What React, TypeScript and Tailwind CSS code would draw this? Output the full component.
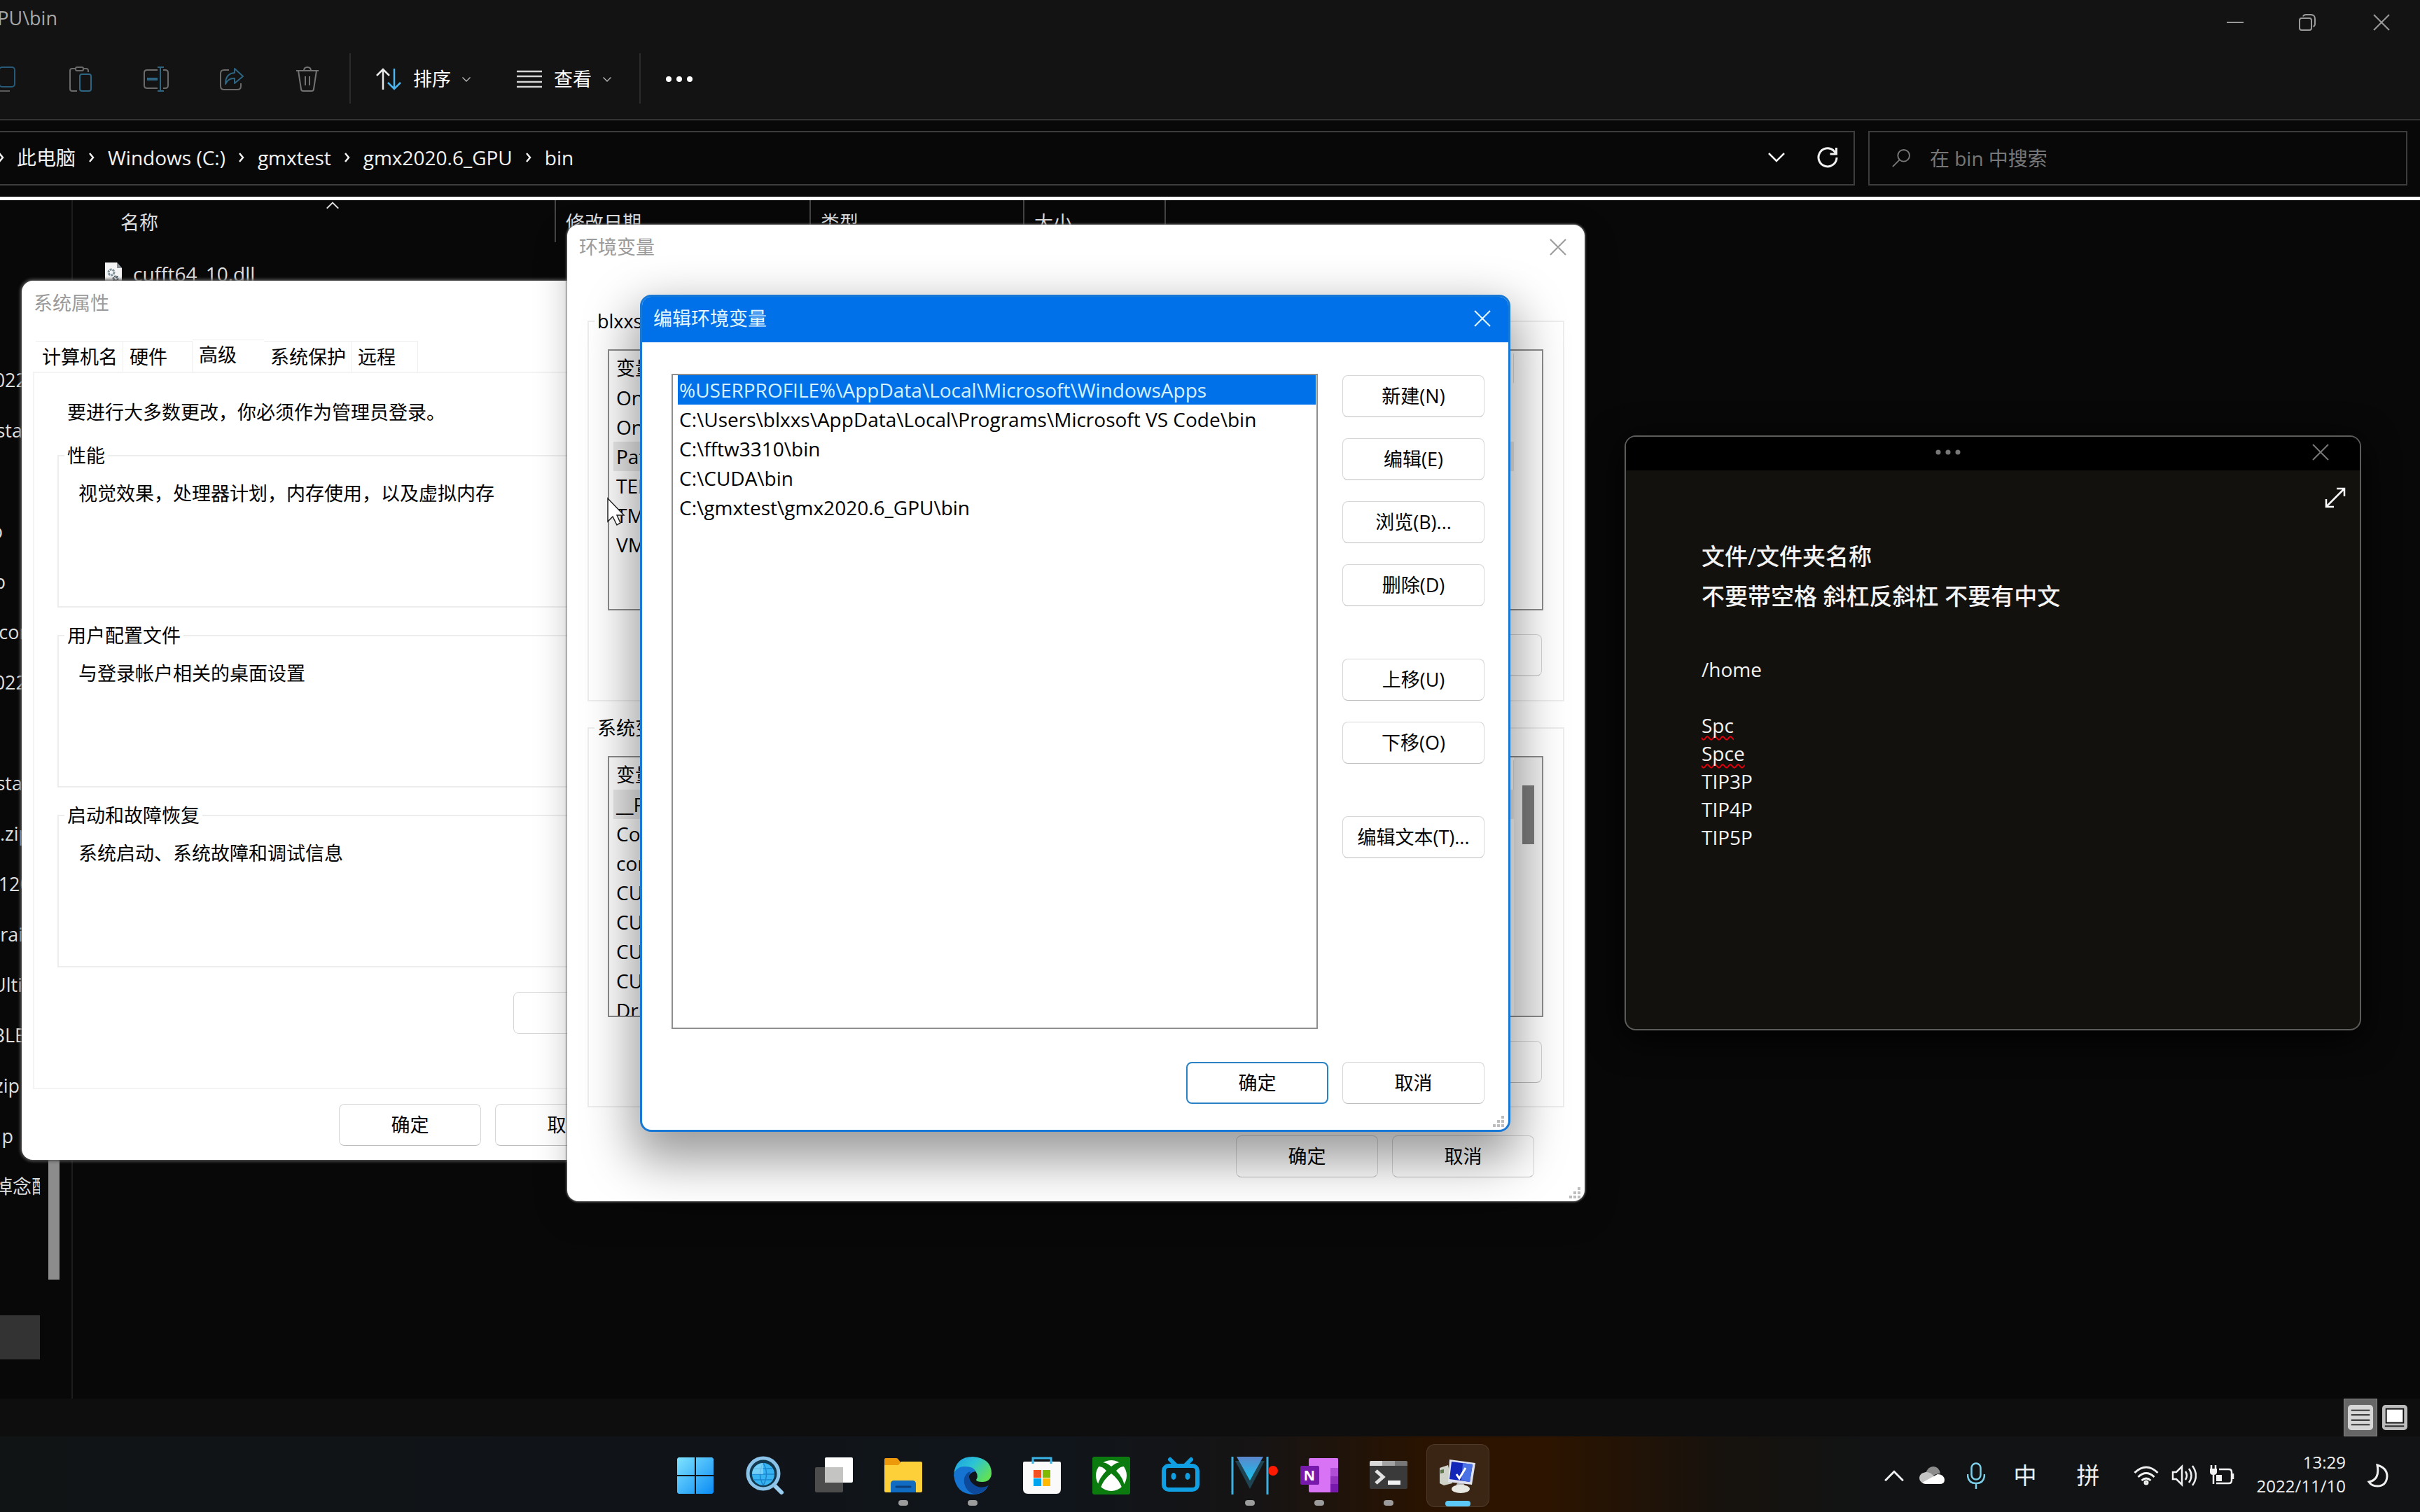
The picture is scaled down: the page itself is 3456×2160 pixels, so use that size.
import type { ReactNode } from 'react';

const crumbs = ['此电脑', 'Windows (C:)', 'gmxtest', 'gmx2020.6_GPU', 'bin'];

// entries of the scrolled tree, `end` is where the visible name stops
const treeRows = [
  { name: '022', end: 38 },
  { name: 'sta', end: 32 },
  { name: '', end: 32 },
  { name: 'zip', end: 4 },
  { name: 'zip', end: 8 },
  { name: 'con', end: 44 },
  { name: '022', end: 38 },
  { name: '', end: 32 },
  { name: 'sta', end: 32 },
  { name: '.zip', end: 43 },
  { name: '120', end: 44 },
  { name: 'rai', end: 33 },
  { name: 'Ulti', end: 32 },
  { name: 'BLE', end: 36 },
  { name: 'zip', end: 28 },
  { name: 'p', end: 19 },
  { name: '悼念配', end: 72 },
];

const tabs = [
  { name: '计算机名', width: 'w-[125px]' },
  { name: '硬件', width: 'w-[99px]' },
  { name: '高级', width: 'w-[102px]', active: true },
  { name: '系统保护', width: 'w-[125px]' },
  { name: '远程', width: 'w-[95px]' },
];

const groups = [
  { title: '性能', text: '视觉效果，处理器计划，内存使用，以及虚拟内存' },
  { title: '用户配置文件', text: '与登录帐户相关的桌面设置' },
  { title: '启动和故障恢复', text: '系统启动、系统故障和调试信息' },
];

const userVars = ['OneDrive', 'OneDriveConsumer', 'Path', 'TEMP', 'TMP', 'VMD'];
const systemVars = [
  '__PSLockDownPolicy',
  'ComSpec',
  'configsetroot',
  'CUDA_PATH',
  'CUDA_PATH_V11_6',
  'CUDNN',
  'CUDNN_PATH',
  'DriverData',
];

const paths = [
  '%USERPROFILE%\\AppData\\Local\\Microsoft\\WindowsApps',
  'C:\\Users\\blxxs\\AppData\\Local\\Programs\\Microsoft VS Code\\bin',
  'C:\\fftw3310\\bin',
  'C:\\CUDA\\bin',
  'C:\\gmxtest\\gmx2020.6_GPU\\bin',
];

function Close({ className }: { className: string }) {
  return (
    <svg viewBox="0 0 24 24" className={className} fill="none" stroke="currentColor" strokeWidth="2">
      <path d="M1 1 23 23M23 1 1 23" />
    </svg>
  );
}

function Chevron({ className }: { className: string }) {
  return (
    <svg viewBox="0 0 24 14" className={className} fill="none" stroke="currentColor" strokeWidth="2.5">
      <path d="M1 1 12 12 23 1" />
    </svg>
  );
}

function Grip() {
  return (
    <svg viewBox="0 0 16 16" className="absolute right-1.5 bottom-1 size-4" fill="#bdbdbd">
      <path d="M12 0h4v4h-4zM12 6h4v4h-4zM12 12h4v4h-4zM6 6h4v4H6zM6 12h4v4H6zM0 12h4v4H0z" />
    </svg>
  );
}

function DialogButton({ children, primary }: { children?: ReactNode; primary?: boolean }) {
  return (
    <button
      className={
        primary
          ? 'h-[60px] w-[203px] shrink-0 rounded-lg border-2 border-[#2a82c4] bg-white'
          : 'h-[60px] w-[203px] shrink-0 rounded-lg border border-[#d6d6d6] border-b-[#bcbcbc] bg-white/80'
      }
    >
      {children}
    </button>
  );
}

function GroupBox({ title, className, children }: { title: string; className?: string; children: ReactNode }) {
  return (
    <fieldset className={`min-w-0 border-2 border-[#ededed] pl-2 ${className ?? ''}`}>
      <legend className="px-1 leading-[40px]">{title}</legend>
      {children}
    </fieldset>
  );
}

function Explorer() {
  return (
    <main className="flex min-h-0 flex-1 flex-col">
      <header className="border-b-2 border-[#333] bg-[#131313]">
        <div className="flex h-[64px] items-center justify-between">
          <h1 className="flex w-[82px] justify-end overflow-hidden leading-[40px] text-[#a8a8a8]">
            <span className="mb-3">gmx2020.6_GPU\bin</span>
          </h1>
          <div className="flex text-[#9a9a9a]">
            <button aria-label="最小化" className="flex h-[64px] w-[104px] items-center justify-center">
              <svg viewBox="0 0 24 24" className="size-6" stroke="currentColor" strokeWidth="2"><path d="M0 12h24" /></svg>
            </button>
            <button aria-label="还原" className="flex h-[64px] w-[102px] items-center justify-center">
              <svg viewBox="0 0 24 24" className="size-6" fill="none" stroke="currentColor" strokeWidth="2">
                <rect x="1" y="6" width="17" height="17" rx="3" />
                <path d="M6 3.500Q7 1 10 1h7q6 0 6 6v7q0 3-2.500 4" />
              </svg>
            </button>
            <button aria-label="关闭" className="flex h-[64px] w-[110px] items-center justify-center">
              <Close className="size-6" />
            </button>
          </div>
        </div>

        <div className="-ml-[47px] flex h-[106px] items-start pt-3">
          <button aria-label="复制" className="flex h-[74px] w-[108px] items-center justify-center">
            <svg viewBox="0 0 36 36" className="size-9" fill="none" strokeWidth="2">
              <rect x="10" y="1" width="22" height="28" rx="4" stroke="#275a78" />
              <path d="M4 8v21q0 6 6 6h15" stroke="#5a5a5a" />
            </svg>
          </button>
          <button aria-label="粘贴" className="flex h-[74px] w-[108px] items-center justify-center">
            <svg viewBox="0 0 36 36" className="size-9" fill="none" strokeWidth="2">
              <path d="M11 3H6q-3 0-3 3v26q0 3 3 3h7M22 3h4q3 0 3 3v2" stroke="#6a6a6a" />
              <rect x="11" y="1" width="11" height="5" rx="2" stroke="#6a6a6a" />
              <rect x="17" y="11" width="16" height="24" rx="3" stroke="#2d6583" />
            </svg>
          </button>
          <button aria-label="重命名" className="flex h-[74px] w-[108px] items-center justify-center">
            <svg viewBox="0 0 36 36" className="size-9" fill="none" strokeWidth="2">
              <path d="M20 5H5Q1 5 1 9v18q0 4 4 4h15M28 5h3q4 0 4 4v18q0 4-4 4h-3" stroke="#6a6a6a" />
              <path d="M24 1v34M20 1h9M20 35h9" stroke="#2d6583" />
              <path d="M5 18h15" stroke="#2d6583" strokeWidth="4" />
            </svg>
          </button>
          <button aria-label="共享" className="flex h-[74px] w-[108px] items-center justify-center">
            <svg viewBox="0 0 36 36" className="size-9" fill="none" strokeWidth="2">
              <path d="M14 5H7Q2 5 2 10v18q0 5 5 5h19q5 0 5-5v-4" stroke="#6a6a6a" />
              <path d="M22 3 34 14 22 24v-7q-9-1-13 8 0-15 13-16z" stroke="#2d6583" strokeLinejoin="round" />
            </svg>
          </button>
          <button aria-label="删除" className="flex h-[74px] w-[108px] items-center justify-center">
            <svg viewBox="0 0 36 36" className="size-9" fill="none" stroke="#737373" strokeWidth="2">
              <path d="M2 6h32M13 6q0-5 5-5t5 5M5 6l4 26q0 3 3 3h12q3 0 3-3L31 6M15 14v13M21 14v13" />
            </svg>
          </button>
          <div className="mx-1.5 h-[72px] w-0.5 bg-[#2b2b2b]" />
          <button className="ml-[30px] flex h-[74px] items-center text-white">
            <svg viewBox="0 0 36 32" className="h-8 w-9" fill="none" strokeWidth="2.500">
              <path d="M10 31V2M1 11l9-9 9 9" stroke="#e8e8e8" />
              <path d="M26 1v29M17 21l9 9 9-9" stroke="#4cb3ef" />
            </svg>
            <span className="mr-4 ml-[17px]">排序</span>
            <Chevron className="w-3 text-[#bbb]" />
          </button>
          <button className="mr-10 ml-[66px] flex h-[74px] items-center text-white">
            <svg viewBox="0 0 36 26" className="w-9" stroke="#d4d4d4" strokeWidth="2.500">
              <path d="M0 2h36M0 9h36M0 17h36M0 24h36" />
            </svg>
            <span className="mr-4 ml-[17px]">查看</span>
            <Chevron className="w-3 text-[#bbb]" />
          </button>
          <div className="h-[72px] w-0.5 bg-[#2b2b2b]" />
          <button aria-label="更多" className="ml-9 flex h-[74px] items-center">
            <svg viewBox="0 0 38 8" className="w-[38px]" fill="#fff">
              <circle cx="4" cy="4" r="4" /><circle cx="19" cy="4" r="4" /><circle cx="34" cy="4" r="4" />
            </svg>
          </button>
        </div>
      </header>

      <div className="flex gap-[19px] border-b-[5px] border-white bg-[#080808] pt-[15px] pr-[18px] pb-4">
        <nav className="flex h-[78px] flex-1 items-center border-2 border-l-0 border-[#3d3d3d] pb-0.5 text-[28px] text-[#f2f2f2]">
          {crumbs.map((crumb, i) => (
            <span key={crumb} className="flex items-center">
              <svg viewBox="0 0 8 14" className={i === 0 ? '-ml-0.5 mr-[18px] w-2' : 'mx-[19px] w-2'} fill="none" stroke="currentColor" strokeWidth="2.500">
                <path d="M1 1 6 7 1 13" />
              </svg>
              <a href="#" className="whitespace-nowrap">{crumb}</a>
            </span>
          ))}
          <button aria-label="历史记录" className="mr-[46px] ml-auto">
            <Chevron className="w-6" />
          </button>
          <button aria-label="刷新" className="mr-[22px]">
            <svg viewBox="0 0 30 30" className="size-[30px]" fill="none" stroke="currentColor" strokeWidth="3">
              <path d="M28 15A13 13 0 1 1 23.500 5L27 9M27.500 1v9h-9" />
            </svg>
          </button>
        </nav>
        <label className="flex h-[78px] w-[770px] items-center border-2 border-[#3d3d3d] pl-8 text-[28px]">
          <svg viewBox="0 0 28 28" className="mr-7 size-7" fill="none" stroke="#7a7a7a" strokeWidth="2">
            <circle cx="18" cy="10" r="9" /><path d="M11.500 16.500 1 27" />
          </svg>
          <input
            type="search"
            placeholder="在 bin 中搜索"
            className="w-full bg-transparent outline-none placeholder:text-[#777]"
          />
        </label>
      </div>

      <div className="flex min-h-0 flex-1 text-[#dedede]">
        <aside className="flex w-[104px] border-r-2 border-[#1c1c1c]">
          <ul className="w-[57px] overflow-hidden pt-[221px]">
            {treeRows.map((row, i) => (
              <li key={i} className="flex h-[72px] items-center justify-end whitespace-nowrap" style={{ width: row.end }}>
                {row.name}
              </li>
            ))}
            <li className="mt-[148px] h-[63px] bg-[#333]" />
          </ul>
          <div className="mt-[400px] mb-[170px] ml-3 w-4 bg-[#8c8c8c]" />
        </aside>
        <div className="flex-1">
          <table className="ml-[54px] table-fixed border-collapse text-left">
            <thead>
              <tr className="h-[60px]">
                <th className="relative w-[635px] border-r-2 border-[#444] pt-1 pl-3.5 font-normal">
                  名称
                  <Chevron className="absolute top-0.5 left-[308px] w-[18px] rotate-180" />
                </th>
                <th className="w-[364px] border-r-2 border-[#444] pt-1 pl-3.5 font-normal">修改日期</th>
                <th className="w-[305px] border-r-2 border-[#444] pt-1 pl-3.5 font-normal">类型</th>
                <th className="w-[202px] border-r-2 border-[#444] pt-1 pl-3.5 font-normal">大小</th>
              </tr>
            </thead>
            <tbody>
              <tr className="h-[90px]">
                <td>
                  <div className="-ml-2 flex items-center gap-4 text-[28px]">
                    <svg viewBox="0 0 24 32" className="h-8 w-6">
                      <path d="M0 0h17l7 8v24H0z" fill="#f4f4f4" />
                      <path d="M17 0v8h7" fill="#8a9298" />
                      <circle cx="9" cy="14" r="4" fill="none" stroke="#7e929c" strokeWidth="3" strokeDasharray="3 1" />
                      <circle cx="15" cy="23" r="3" fill="none" stroke="#44525c" strokeWidth="3" strokeDasharray="2 1" />
                    </svg>
                    cufft64_10.dll
                  </div>
                </td>
                <td /><td /><td />
              </tr>
            </tbody>
          </table>
        </div>
      </div>

      <footer className="flex h-[54px] items-center justify-end gap-[7px] bg-[#0e0e0e] pr-[18px]">
        <button aria-label="详细信息" className="flex h-[54px] w-12 items-center justify-center border border-[#888] bg-[#666]">
          <svg viewBox="0 0 38 38" className="size-9">
            <rect width="38" height="38" rx="5" fill="#d6d6d6" />
            <path d="M5 8h28M5 15h28M5 23h28M5 30h28" stroke="#222" strokeWidth="2" />
          </svg>
        </button>
        <button aria-label="大图标">
          <svg viewBox="0 0 38 38" className="size-9">
            <rect width="38" height="38" rx="5" fill="#bdbdbd" />
            <rect x="6" y="6" width="26" height="21" fill="#fff" stroke="#111" strokeWidth="2" />
            <path d="M4 32h29" stroke="#222" strokeWidth="2" />
          </svg>
        </button>
      </footer>
    </main>
  );
}

function SystemProperties() {
  return (
    <section className="absolute top-[401px] left-[31px] w-[1118px] rounded-2xl bg-white px-4 pb-5 text-black shadow-[0_0_4px_2px_#555]">
      <h2 className="flex h-[64px] items-center pl-px text-[#9a9a9a]">系统属性</h2>
      <div role="tablist" className="mt-5 ml-1 flex h-[46px] items-end">
        {tabs.map((tab) => (
          <button
            key={tab.name}
            role="tab"
            className={`${tab.width} ${
              tab.active ? 'h-[46px] pb-1' : 'h-[44px] border-r'
            } whitespace-nowrap border-t border-[#efefef] pl-[9px] text-left leading-[40px]`}
          >
            {tab.name}
          </button>
        ))}
      </div>
      <div className="h-[1025px] border-2 border-[#f3f3f3] px-[33px] pt-9">
        <p className="ml-3.5 leading-[40px]">要进行大多数更改，你必须作为管理员登录。</p>
        <div className="mt-[22px] flex flex-col gap-5">
          {groups.map((group) => (
            <GroupBox key={group.title} title={group.title} className="h-[237px]">
              <p className="mt-[14px] ml-5 leading-[40px]">{group.text}</p>
            </GroupBox>
          ))}
        </div>
        <div className="mt-[35px] flex justify-end">
          <button className="h-[60px] w-[365px] rounded-lg border border-[#d6d6d6]">环境变量(N)...</button>
        </div>
      </div>
      <div className="mt-[21px] flex justify-end gap-5">
        <DialogButton>确定</DialogButton>
        <DialogButton>取消</DialogButton>
        <DialogButton>应用(A)</DialogButton>
      </div>
    </section>
  );
}

function VariableList({ names, selected, scroll }: { names: string[]; selected: string; scroll?: boolean }) {
  return (
    <div className="relative mt-5 mr-7 ml-[19px] flex h-[373px] items-start overflow-hidden border-2 border-[#8c8c8c] bg-white/60 pl-1.5">
      <table className="mt-1 w-[1286px] shrink-0 table-fixed text-left text-[28px] leading-[42px]">
        <thead className="text-[27px]">
          <tr>
            <th className="w-[420px] pl-1 font-normal">变量</th>
            <th className="border-r border-[#ddd] font-normal">值</th>
          </tr>
        </thead>
        <tbody>
          {names.map((name) => (
            <tr key={name} className={name === selected ? 'bg-[#e9e9e9]' : ''}>
              <td className="pl-1">{name}</td>
              <td />
            </tr>
          ))}
        </tbody>
      </table>
      {scroll && (
        <div className="h-full flex-1 bg-[#f0f0f0] pt-10 pl-3">
          <div className="h-[84px] w-[17px] bg-[#7c7c7c]" />
        </div>
      )}
    </div>
  );
}

function EnvironmentVariables() {
  return (
    <section className="absolute top-[321px] left-[810px] w-[1453px] rounded-2xl bg-white pb-[34px] text-black shadow-[0_0_3px_1px_#777,0_16px_50px_rgba(0,0,0,0.22)]">
      <div className="flex h-[68px] items-center justify-between pr-[26px] pb-1 pl-[17px] text-[#9a9a9a]">
        <h2>环境变量</h2>
        <button aria-label="关闭"><Close className="size-6" /></button>
      </div>
      <div className="mt-[50px] flex flex-col gap-[18px] px-[29px]">
        <GroupBox title="blxxs 的用户变量(U)">
          <VariableList names={userVars} selected="Path" />
          <div className="mt-[34px] mr-[30px] mb-[34px] flex justify-end gap-5">
            <DialogButton>新建(N)...</DialogButton>
            <DialogButton>编辑(E)...</DialogButton>
            <DialogButton>删除(D)</DialogButton>
          </div>
        </GroupBox>
        <GroupBox title="系统变量(S)">
          <VariableList names={systemVars} selected="__PSLockDownPolicy" scroll />
          <div className="mt-[34px] mr-[30px] mb-[33px] flex justify-end gap-5">
            <DialogButton>新建(W)...</DialogButton>
            <DialogButton>编辑(I)...</DialogButton>
            <DialogButton>删除(L)</DialogButton>
          </div>
        </GroupBox>
      </div>
      <div className="mt-10 mr-[72px] flex justify-end gap-5">
        <DialogButton>确定</DialogButton>
        <DialogButton>取消</DialogButton>
      </div>
      <Grip />
    </section>
  );
}

function EditVariable() {
  return (
    <section className="absolute top-[421px] left-[914px] w-[1243px] overflow-hidden rounded-2xl border-[3px] border-[#1878d6] bg-white pb-[37px] text-black shadow-[0_30px_70px_10px_rgba(0,0,0,0.4)]">
      <div className="flex h-[65px] items-center justify-between bg-[#0071e8] pr-[25px] pb-1 pl-4 text-[#e6f6ff]">
        <h2>编辑环境变量</h2>
        <button aria-label="关闭"><Close className="size-6" /></button>
      </div>
      <div className="mt-[45px] mr-[34px] ml-[42px] flex gap-[35px]">
        <ul role="listbox" className="h-[936px] flex-1 border-2 border-[#8f8f8f] pr-px pl-[7px] text-[28px] leading-[42px]">
          {paths.map((path, i) => (
            <li
              key={path}
              role="option"
              aria-selected={i === 0}
              className={i === 0 ? 'bg-[#0071e8] pl-0.5 text-[#d6f1ff]' : 'pl-0.5'}
            >
              {path}
            </li>
          ))}
        </ul>
        <div className="flex flex-col gap-[30px] pt-0.5">
          <DialogButton>新建(N)</DialogButton>
          <DialogButton>编辑(E)</DialogButton>
          <DialogButton>浏览(B)...</DialogButton>
          <DialogButton>删除(D)</DialogButton>
          <div className="my-[45px] flex flex-col gap-[30px]">
            <DialogButton>上移(U)</DialogButton>
            <DialogButton>下移(O)</DialogButton>
          </div>
          <DialogButton>编辑文本(T)...</DialogButton>
        </div>
      </div>
      <div className="mt-[47px] mr-[34px] flex justify-end gap-5">
        <DialogButton primary>确定</DialogButton>
        <DialogButton>取消</DialogButton>
      </div>
      <Grip />
    </section>
  );
}

function StickyNote() {
  return (
    <section className="absolute top-[622px] left-[2320px] h-[850px] w-[1052px] overflow-hidden rounded-2xl border-2 border-[#5c5c5a] bg-[#12110d] text-[#f4f4f4] shadow-[0_10px_50px_#000]">
      <div className="relative flex h-12 items-center justify-center bg-black pb-1 text-[#777]">
        <svg viewBox="0 0 36 8" className="w-9 -translate-x-16" fill="#777">
          <circle cx="4" cy="4" r="3.500" /><circle cx="18" cy="4" r="3.500" /><circle cx="32" cy="4" r="3.500" />
        </svg>
        <button aria-label="关闭" className="absolute right-11"><Close className="size-6" /></button>
      </div>
      <div className="flex justify-end pt-6 pr-5">
        <button aria-label="展开">
          <svg viewBox="0 0 30 30" className="size-[30px]" fill="none" stroke="#fff" strokeWidth="2.500">
            <path d="M2 28 28 2M17 2h11v11M2 17v11h11" />
          </svg>
        </button>
      </div>
      <div className="mt-10 ml-[108px] font-medium">
        <div className="text-[33px] leading-[57px]">
          <p>文件/文件夹名称</p>
          <p>不要带空格 斜杠反斜杠 不要有中文</p>
        </div>
        <div className="mt-14 text-[28px] leading-[40px]">
          <p>/home</p>
          <p className="mt-10 underline decoration-red-600 decoration-wavy decoration-2 underline-offset-4 [text-decoration-skip-ink:none]">Spc</p>
          <p className="underline decoration-red-600 decoration-wavy decoration-2 underline-offset-4 [text-decoration-skip-ink:none]">Spce</p>
          <p>TIP3P</p>
          <p>TIP4P</p>
          <p>TIP5P</p>
        </div>
      </div>
    </section>
  );
}

function TaskIcon({ label, running, active, children }: { label: string; running?: boolean; active?: boolean; children: ReactNode }) {
  return (
    <button
      aria-label={label}
      className={`relative flex size-[90px] items-center justify-center rounded-xl ${
        active ? 'border border-[#ffffff1a] bg-[#ffffff14]' : ''
      }`}
    >
      <svg viewBox="0 0 54 54" className="size-[54px] overflow-visible">{children}</svg>
      {running && <span className="absolute bottom-0.5 h-2 w-3.5 rounded-full bg-[#9c9c9c]" />}
      {active && <span className="absolute bottom-0 h-2 w-9 rounded-full bg-[#5cc8f5]" />}
    </button>
  );
}

function Taskbar() {
  return (
    <footer className="flex h-[108px] items-center bg-[linear-gradient(90deg,#111415_0%,#101419_28%,#10151b_44%,#161414_52%,#2a1300_59%,#2c1400_64%,#17120d_71%,#111314_77%,#111314_100%)] pt-1 pl-[948px]">
      <div className="flex gap-[9px]">
        <TaskIcon label="开始">
          <defs>
            <linearGradient id="win" x1="0" y1="0" x2="1" y2="1">
              <stop offset="0" stopColor="#7fe3ff" />
              <stop offset="1" stopColor="#0a8cf5" />
            </linearGradient>
          </defs>
          <path d="M3 1h23v25H1V3zM28 1h23l2 2v23H28zM1 28h25v25H3l-2-2zM28 28h25v23l-2 2H28z" fill="url(#win)" />
        </TaskIcon>
        <TaskIcon label="搜索">
          <path d="M41 41 51 51" stroke="#9bcdee" strokeWidth="6" strokeLinecap="round" />
          <circle cx="25" cy="24" r="22" fill="#12394f" stroke="#8cc3e8" strokeWidth="5" />
          <circle cx="25" cy="25" r="16" fill="#38b4f2" />
          <path d="M25 9q-9 16 0 32M25 9q9 16 0 32M9 25h32M12 17h26M12 33h26" fill="none" stroke="#1b86cf" strokeWidth="1.500" />
          <path d="M25 9a16 16 0 0 0-16 16h16z" fill="#9be2fb" opacity=".6" />
        </TaskIcon>
        <TaskIcon label="任务视图">
          <rect x="14" y="1" width="40" height="36" rx="2" fill="#fff" />
          <rect y="15" width="40" height="36" rx="2" fill="#4c4c4c" />
          <rect x="14" y="15" width="26" height="22" fill="#c4c4c2" />
        </TaskIcon>
        <TaskIcon label="文件资源管理器" running>
          <path d="M0 4q0-2 2-2h15q2 0 3 2l4 5v6H0z" fill="#ec9a0c" />
          <path d="M0 12h20l4-5h28q2 0 2 2v40q0 2-2 2H2q-2 0-2-2z" fill="#fdd03a" />
          <path d="M9 51V39q0-5 5-5h26q5 0 5 5v12z" fill="#0f6cc2" />
          <path d="M17 43h20" stroke="#0a3f7a" strokeWidth="3" strokeLinecap="round" />
        </TaskIcon>
        <TaskIcon label="Edge" running>
          <defs>
            <linearGradient id="edgeTop" x1="0" y1="0" x2="1" y2=".6">
              <stop offset="0" stopColor="#1b9de2" />
              <stop offset=".5" stopColor="#2cc3d6" />
              <stop offset="1" stopColor="#5fe05a" />
            </linearGradient>
          </defs>
          <path d="M0 25Q3 0 27 0q27 2 27 24-1 12-13 12-9 0-9-3 3-4 1-9-3-9-17-9Q4 15 0 25z" fill="url(#edgeTop)" />
          <path d="M0 26Q3 14 16 14q13 0 15 7-10 1-10 12 1 14 14 15 8-1 14-6-5 11-20 12Q3 54 0 26z" fill="#1573d1" />
          <path d="M21 22q-8 6-6 16 3 13 16 16 12-2 19-13-10 5-18 1-9-5-10-13 0-6 3-8z" fill="#0d4a9c" />
        </TaskIcon>
        <TaskIcon label="Microsoft Store">
          <path d="M14 10V2h26v8" fill="none" stroke="#3ab3e6" strokeWidth="3" />
          <path d="M2 7h50q2 0 2 2v37q0 7-6 7H7q-7 0-7-7V9q0-2 2-2z" fill="#fafafa" />
          <path d="M14 10V6M40 10V6" stroke="#3ab3e6" strokeWidth="3" />
          <path d="M15 19h11v11H15z" fill="#f25022" />
          <path d="M28 19h11v11H28z" fill="#7fba00" />
          <path d="M15 31h11v11H15z" fill="#00a4ef" />
          <path d="M28 31h11v11H28z" fill="#ffb900" />
        </TaskIcon>
        <TaskIcon label="Xbox">
          <rect width="54" height="54" rx="3" fill="#0b7a0f" />
          <circle cx="27" cy="27" r="22" fill="#fff" />
          <path d="M14 8q6 0 13 6 7-6 13-6l6 6q-6-1-12 6 10 10 12 22l-3 4Q38 32 27 24 16 32 11 46l-4-4Q10 30 20 20q-6-7-12-6z" fill="#0b7a0f" />
        </TaskIcon>
        <TaskIcon label="哔哩哔哩">
          <path d="M12 4l8 8M42 4l-8 8" stroke="#109fe3" strokeWidth="6" strokeLinecap="round" />
          <rect x="3" y="13" width="48" height="34" rx="7" fill="none" stroke="#109fe3" strokeWidth="6" />
          <ellipse cx="17" cy="28" rx="3.500" ry="5" fill="#109fe3" />
          <ellipse cx="37" cy="28" rx="3.500" ry="5" fill="#109fe3" />
        </TaskIcon>
        <TaskIcon label="VMD" running>
          <defs>
            <linearGradient id="vmd" x1="0" y1="0" x2="0" y2="1">
              <stop offset="0" stopColor="#5b86cc" />
              <stop offset="1" stopColor="#16c4ee" />
            </linearGradient>
          </defs>
          <path d="M2 0v54M52 0v54" stroke="#3fb0e0" strokeWidth="3" />
          <path d="M6 6 27 46 48 6z" fill="#1f4350" />
          <path d="M8 0h38L27 34z" fill="url(#vmd)" />
          <circle cx="60" cy="20" r="7" fill="#ff1a00" />
        </TaskIcon>
        <TaskIcon label="OneNote" running>
          <path d="M14 2h39q1 0 1 2v45q0 2-2 2H14q-2 0-2-2V4q0-2 2-2z" fill="#d873f5" />
          <path d="M43 16h11v12H43z" fill="#b04fd6" />
          <path d="M43 28h11v11H43z" fill="#9333bd" />
          <path d="M43 39h11v10q0 2-2 2h-9z" fill="#7719aa" />
          <rect y="13" width="27" height="27" rx="2" fill="#7719aa" />
          <text x="13" y="34" textAnchor="middle" fontFamily="Open Sans" fontWeight="bold" fontSize="20" fill="#fff">N</text>
        </TaskIcon>
        <TaskIcon label="终端" running>
          <rect y="6" width="54" height="40" rx="2" fill="#3a3a3a" />
          <path d="M0 13V8q0-2 2-2h16v7z" fill="#d9d9d9" />
          <path d="M18 6h18v7H18z" fill="#a3a3a3" />
          <path d="M36 6h16q2 0 2 2v5H36z" fill="#777" />
          <path d="M9 20l10 9-10 9" fill="none" stroke="#e3e3e3" strokeWidth="5" />
          <path d="M26 34h18v6H26z" fill="#f2f2f2" />
        </TaskIcon>
        <TaskIcon label="系统属性" active>
          <path d="M1 16 13 12l6 26-12 3-6-3z" fill="#cfd2c8" />
          <path d="M2 19l5-1v5l-5 1z" fill="#5c7a4a" />
          <path d="M15 4 52 9l-5 31-34-4z" fill="#dfe2ee" />
          <path d="M18 7 48 11l-4 25-29-4z" fill="#1226b8" />
          <path d="M34 9l14 2-4 25-12-2z" fill="#4a72e4" />
          <path d="M25 25l4 6 9-15" fill="none" stroke="#fff" strokeWidth="3" />
          <path d="M26 38h9l3 6H23z" fill="#b9b9b9" />
          <ellipse cx="31" cy="46" rx="13" ry="6" fill="#e9e9e4" />
        </TaskIcon>
      </div>

      <div className="ml-auto flex items-center pr-3.5 text-[#f0f0f0]">
        <button aria-label="显示隐藏的图标" className="flex w-[54px] justify-center">
          <Chevron className="w-7 rotate-180" />
        </button>
        <button aria-label="OneDrive" className="flex w-[54px] justify-center">
          <svg viewBox="0 0 36 26" className="w-9">
            <path d="M9 10Q12 0 20 0t10 10q-8 0-13 6z" fill="#8c8c8c" />
            <path d="M6 24Q0 22 0 16t9-8q6-1 12 6z" fill="#c4c4c4" />
            <path d="M4 23 26 11q9 0 10 8 0 6-7 6H9q-3 0-5-2z" fill="#fff" />
          </svg>
        </button>
        <button aria-label="麦克风" className="flex w-[72px] justify-center">
          <svg viewBox="0 0 26 38" className="w-[26px]" fill="none" stroke="#7ccfe8" strokeWidth="2.500">
            <rect x="6.500" y="1.500" width="13" height="23" rx="6.500" />
            <path d="M1 17q0 13 12 13t12-13M13 30v8" />
          </svg>
        </button>
        <button className="w-[68px] text-[33px]">中</button>
        <button className="w-[112px] text-[33px]">拼</button>
        <svg viewBox="0 0 36 28" className="mx-[9px] w-9" fill="none" stroke="currentColor" strokeWidth="3">
          <path d="M1.500 10Q18-6 34.500 10M6.500 16q11.500-11 23 0M11.500 21q6.500-6 13 0" />
          <circle cx="18" cy="24" r="2" />
        </svg>
        <svg viewBox="0 0 36 32" className="mx-[9px] w-9" fill="none" stroke="currentColor" strokeWidth="2.500">
          <path d="M2 11h5l8-8v26l-8-8H2zM20 10q4 6 0 12M25 6q7 10 0 20M30 2q10 14 0 28" />
        </svg>
        <svg viewBox="0 0 36 32" className="mx-[9px] w-9" fill="none" stroke="currentColor" strokeWidth="2.500">
          <path d="M14 7h14q4 0 4 4v12q0 4-4 4H10M34 13v8M3 1v6M9 1v6M6 14v14" />
          <path d="M1 6h10v5q0 4-5 4t-5-4zM10 15h8v9h-8z" fill="currentColor" stroke="none" />
        </svg>
        <div className="w-[150px] pb-1 text-right text-2xl leading-[34px]">
          <p>13:29</p>
          <p>2022/11/10</p>
        </div>
        <svg viewBox="0 0 30 34" className="mx-[31px] w-[30px]" fill="none" stroke="currentColor" strokeWidth="3">
          <path d="M14 2q14 4 14 16-1 14-14 14-8 0-12-6 16-3 12-24z" />
        </svg>
      </div>
    </footer>
  );
}

export default function App() {
  return (
    <div className="relative flex h-screen flex-col overflow-hidden bg-[#080808] font-['Open_Sans','Noto_Sans_CJK_SC',sans-serif] text-[27px] leading-[40px]">
      <Explorer />
      <Taskbar />
      <SystemProperties />
      <EnvironmentVariables />
      <EditVariable />
      <StickyNote />
      <svg viewBox="0 0 26 42" className="absolute top-[710px] left-[867px] w-[26px]" fill="#fff" stroke="#222" strokeWidth="1.500">
        <path d="M1 2v33l7-7 6 12 5-3-5-11h10z" />
      </svg>
    </div>
  );
}
